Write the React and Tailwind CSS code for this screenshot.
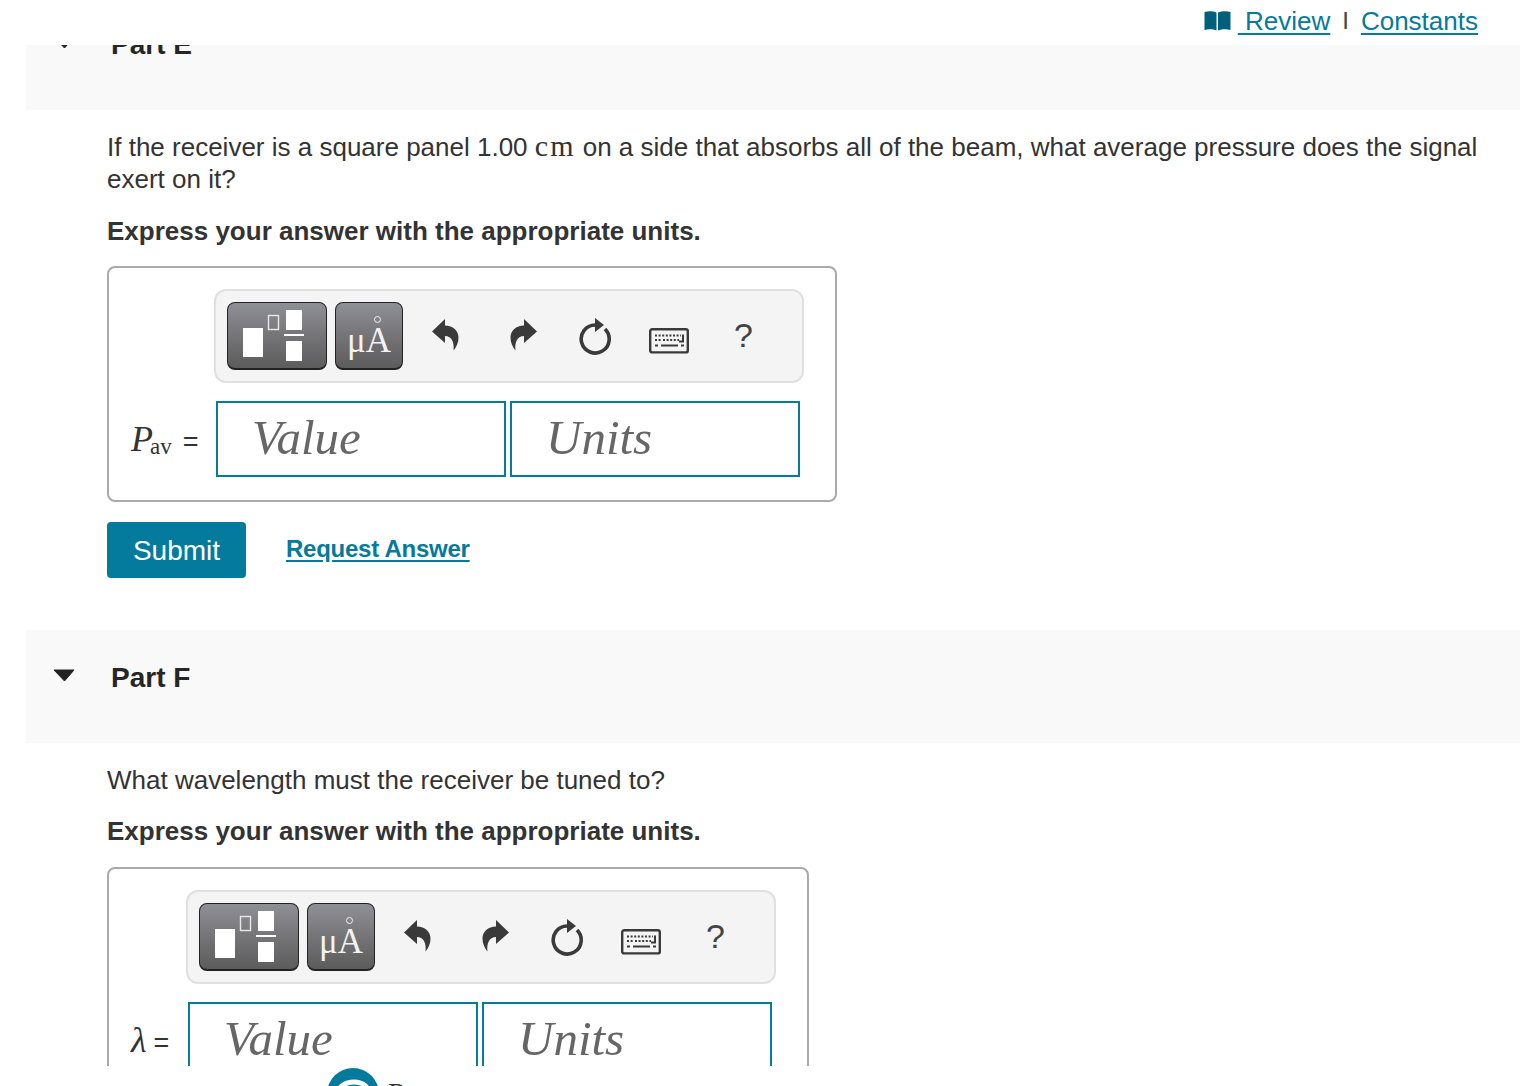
const sans = "font-['Liberation_Sans',Arial,sans-serif]";
const serif = "font-['Liberation_Serif','Times_New_Roman',serif]";

function Caret() {
  return (
    <svg width="22" height="13" viewBox="0 0 22 13" className="shrink-0">
      <path d="M1 1 H21 L11.5 12 Z" fill="#222" stroke="#222" strokeLinejoin="round" strokeWidth="1" />
    </svg>
  );
}

function Band({ title, className }) {
  return (
    <div className={`h-[113px] bg-[#f9f9f9] pl-[27px] pt-[31px] flex items-start ${className}`}>
      <div className="mt-[8px]"><Caret /></div>
      <div className="ml-[36px] mt-[1px] text-[28px] leading-[32px] font-bold text-[#262626]">{title}</div>
    </div>
  );
}

function TemplateButton() {
  return (
    <div className="w-[100px] h-[68px] rounded-[8px] border border-[#222] border-b-2 bg-gradient-to-b from-[#8f8f96] to-[#5c5c5c]">
      <svg width="98" height="65" viewBox="0 0 98 65">
        <rect x="15" y="25" width="20" height="29" fill="#fff" />
        <rect x="40.5" y="12.5" width="10" height="14" fill="none" stroke="#e8e8e8" strokeWidth="1.4" />
        <rect x="58" y="7" width="16" height="20" fill="#fff" />
        <rect x="56" y="31" width="20" height="2" fill="#fff" />
        <rect x="58" y="38" width="16" height="20" fill="#fff" />
      </svg>
    </div>
  );
}

function UnitButton() {
  return (
    <div className={`relative w-[68px] h-[68px] rounded-[8px] border border-[#222] border-b-2 bg-gradient-to-b from-[#8f8f96] to-[#5c5c5c] flex items-start justify-center pt-[18px] text-[35px] leading-[40px] text-[#f2f2f2] ${serif}`}>
      <span>μA</span>
      <span className="absolute left-[38px] top-[13px] w-[7px] h-[7px] rounded-full border border-[#f2f2f2]" />
    </div>
  );
}

function Undo({ flip }) {
  return (
    <svg width="30" height="34" viewBox="0 0 30 34" className={flip ? "-scale-x-100" : ""}>
      <path d="M1 13.5 L14 1 V7.5 C22 7.5 27.5 12.5 27.5 19.5 C27.5 24.5 25.5 29 22.5 32.5 C23.5 25 21 18 14 18 V25 Z" fill="#3a3a3a" />
    </svg>
  );
}

function Reload() {
  return (
    <svg width="34" height="38" viewBox="0 0 34 38">
      <path d="M26 11 A14 14 0 1 1 16 7" fill="none" stroke="#3a3a3a" strokeWidth="3.6" />
      <path d="M16 0 L25 7 L16 14 Z" fill="#3a3a3a" />
    </svg>
  );
}

function Keyboard() {
  return (
    <svg width="40" height="26" viewBox="0 0 40 26">
      <rect x="1.2" y="1.2" width="37.6" height="23.2" rx="2" fill="#f4f4f4" stroke="#3a3a3a" strokeWidth="2.4" />
      <path d="M6 7.5 H32" stroke="#3a3a3a" strokeWidth="2" strokeDasharray="2 1.6" />
      <path d="M6 12 H12 M14 12 H30" stroke="#3a3a3a" strokeWidth="2" strokeDasharray="2 1.6" />
      <path d="M34 6.5 V13.5 H30" stroke="#3a3a3a" strokeWidth="2" fill="none" />
      <path d="M6 17.5 H9 M12 17.5 H29 M32 17.5 H35" stroke="#3a3a3a" strokeWidth="2" />
    </svg>
  );
}

function Toolbar() {
  return (
    <div className="relative w-[590px] h-[94px] rounded-[12px] border-2 border-[#e0e0e0] bg-[#f4f4f4] flex items-start pl-[11px] pt-[11px]">
      <TemplateButton />
      <div className="ml-[8px]"><UnitButton /></div>
      <div className="ml-[28px] mt-[16px]"><Undo /></div>
      <div className="ml-[47px] mt-[16px]"><Undo flip /></div>
      <div className="ml-[41px] mt-[16px]"><Reload /></div>
      <div className="ml-[36px] mt-[26px]"><Keyboard /></div>
      <div className={`ml-[45px] mt-[13px] text-[34px] leading-[40px] text-[#444] ${sans}`}>?</div>
    </div>
  );
}

function Field({ text }) {
  return (
    <div className={`w-[290px] h-[76px] shrink-0 border-2 border-[#047a9c] bg-white pl-[34px] pt-[7px] text-[49px] leading-[56px] italic text-[#666] ${serif}`}>
      {text}
    </div>
  );
}

function AnswerBox({ width, labelWidth, toolbarMargin, label }) {
  return (
    <div className={`mt-[20px] ${width} rounded-[8px] border-2 border-[#aaaaaa] pt-[21px] pb-[23px] pl-[22px]`}>
      <div className={toolbarMargin}><Toolbar /></div>
      <div className="mt-[18px] flex items-center">
        <div className={`${labelWidth} shrink-0 flex items-baseline text-[#333]`}>{label}</div>
        <Field text="Value" />
        <div className="ml-[4px]"><Field text="Units" /></div>
      </div>
    </div>
  );
}

export default function App() {
  return (
    <div className={`w-[1532px] h-[1086px] overflow-hidden bg-white ${sans} text-[#333]`}>
      <header className="h-[45px] pr-[54px] flex items-start justify-end text-[26px] leading-[42px] text-[#047a9c]">
        <svg width="27" height="20" viewBox="0 0 27 20" className="mt-[11px] mr-[7px]">
          <path d="M0.5 1 C4 0 9 0 12.5 1.5 V19.5 C9 18 4 18 0.5 19 Z M14 1.5 C18 0 23 0 26.5 1 V19 C23 18 18 18 14 19.5 Z" fill="#00607c" />
        </svg>
        <a className="underline underline-offset-[3px] whitespace-pre">{" Review"}</a>
        <span className="mx-[12px] text-[#444] text-[24px]">I</span>
        <a className="underline underline-offset-[3px]">Constants</a>
      </header>

      <main className="h-[1021px] w-[1494px] ml-[26px] overflow-hidden">
        <Band title="Part E" className="-mt-[48px]" />
        <div className="pl-[81px] text-[26px] leading-[32px]">
          <p className="mt-[21px] w-[1400px]">
            If the receiver is a square panel 1.00 <span className={`${serif} text-[30px] leading-none tracking-[2px]`}>cm</span> on a side that absorbs all of the beam, what average pressure does the signal exert on it?
          </p>
          <p className="mt-[20px] font-bold">Express your answer with the appropriate units.</p>
          <AnswerBox
            width="w-[730px] !mt-[19px]"
            labelWidth="w-[85px]"
            toolbarMargin="ml-[83px]"
            label={
              <>
                <span className={`${serif} italic text-[36px] leading-none`}>P</span>
                <span className={`${serif} text-[23px] leading-none -ml-[3px] translate-y-[3px]`}>av</span>
                <span className="ml-[11px] text-[27px] leading-none">=</span>
              </>
            }
          />
          <div className="mt-[20px] flex items-center">
            <div className="w-[139px] h-[56px] rounded-[4px] bg-[#047a9c] text-white text-[28px] leading-[57px] text-center">Submit</div>
            <a className="ml-[40px] mb-[2px] text-[#047a9c] font-bold underline underline-offset-[3px] text-[24px] tracking-[-0.25px]">Request Answer</a>
          </div>
        </div>

        <Band title="Part F" className="mt-[52px]" />
        <div className="pl-[81px] text-[26px] leading-[32px]">
          <p className="mt-[21px]">What wavelength must the receiver be tuned to?</p>
          <p className="mt-[19px] font-bold">Express your answer with the appropriate units.</p>
          <AnswerBox
            width="w-[702px]"
            labelWidth="w-[57px]"
            toolbarMargin="ml-[55px]"
            label={
              <>
                <span className={`${serif} italic text-[36px] leading-none`}>λ</span>
                <span className="ml-[7px] text-[27px] leading-none">=</span>
              </>
            }
          />
        </div>
      </main>

      <footer className="h-[20px] overflow-hidden pl-[327px] pt-[2px] flex items-start">
        <svg width="52" height="52" viewBox="0 0 52 52" className="shrink-0">
          <circle cx="26" cy="26" r="26" fill="#047a9c" />
          <path d="M9 30 C10 18 19 14 27 14 C36 14 43 19 43 30" fill="none" stroke="#fff" strokeWidth="5" />
          <path d="M18 26 C22 21 31 21 35 26" fill="none" stroke="#fff" strokeWidth="3" />
        </svg>
        <span className={`${serif} ml-[9px] mt-[8px] text-[30px] leading-[34px] text-[#333]`}>Pearson</span>
      </footer>
    </div>
  );
}
